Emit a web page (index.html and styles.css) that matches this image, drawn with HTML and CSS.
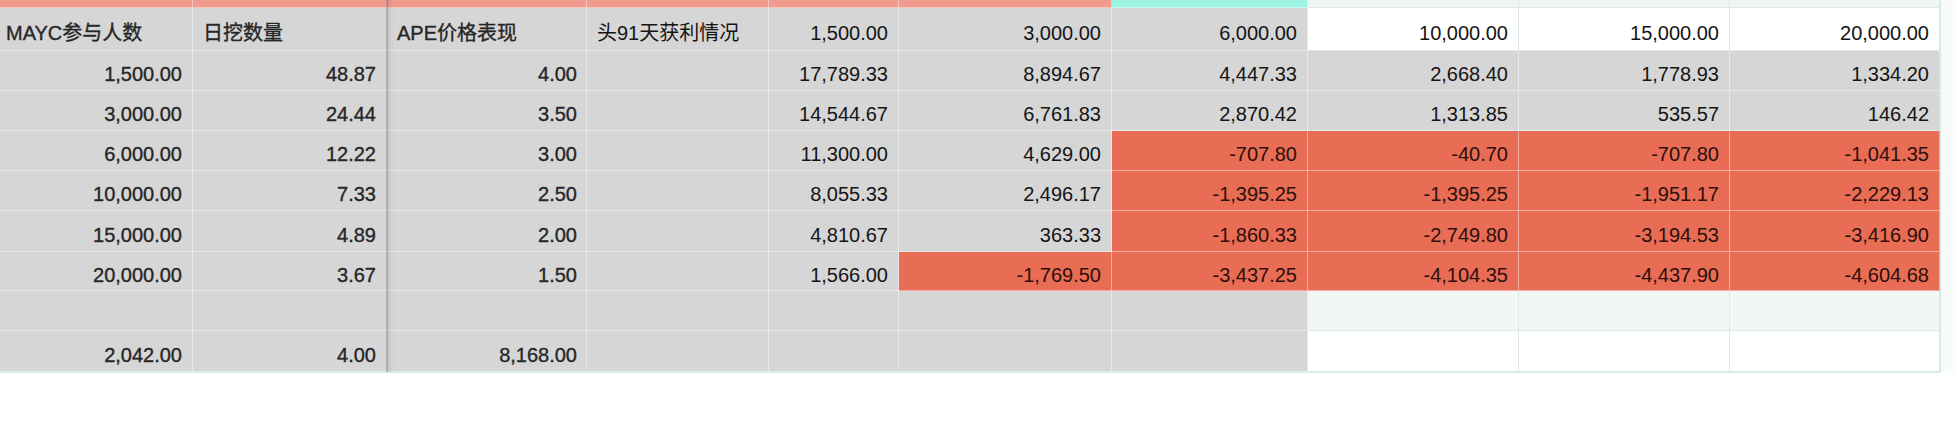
FILE: index.html
```html
<!DOCTYPE html>
<html lang="zh-CN">
<head>
<meta charset="utf-8">
<title>MAYC</title>
<link rel="stylesheet" href="styles.css">
</head>
<body>
<div class="page">
  <div class="sheet">
    <div class="c p"></div><div class="c p"></div><div class="c p"></div><div class="c p"></div><div class="c p"></div><div class="c p"></div><div class="c t"></div><div class="c b"></div><div class="c b"></div><div class="c b"></div>

    <div class="c g fz first txt">MAYC参与人数</div><div class="c g fz txt">日挖数量</div><div class="c g fz txt shade">APE价格表现</div><div class="c g txt">头91天获利情况</div><div class="c g">1,500.00</div><div class="c g">3,000.00</div><div class="c g">6,000.00</div><div class="c w">10,000.00</div><div class="c w">15,000.00</div><div class="c w">20,000.00</div>

    <div class="c g fz first">1,500.00</div><div class="c g fz">48.87</div><div class="c g fz shade">4.00</div><div class="c g"></div><div class="c g">17,789.33</div><div class="c g">8,894.67</div><div class="c g">4,447.33</div><div class="c g">2,668.40</div><div class="c g">1,778.93</div><div class="c g">1,334.20</div>

    <div class="c g fz first">3,000.00</div><div class="c g fz">24.44</div><div class="c g fz shade">3.50</div><div class="c g"></div><div class="c g">14,544.67</div><div class="c g">6,761.83</div><div class="c g">2,870.42</div><div class="c g">1,313.85</div><div class="c g">535.57</div><div class="c g">146.42</div>

    <div class="c g fz first">6,000.00</div><div class="c g fz">12.22</div><div class="c g fz shade">3.00</div><div class="c g"></div><div class="c g">11,300.00</div><div class="c g">4,629.00</div><div class="c r">-707.80</div><div class="c r">-40.70</div><div class="c r">-707.80</div><div class="c r">-1,041.35</div>

    <div class="c g fz first">10,000.00</div><div class="c g fz">7.33</div><div class="c g fz shade">2.50</div><div class="c g"></div><div class="c g">8,055.33</div><div class="c g">2,496.17</div><div class="c r">-1,395.25</div><div class="c r">-1,395.25</div><div class="c r">-1,951.17</div><div class="c r">-2,229.13</div>

    <div class="c g fz first">15,000.00</div><div class="c g fz">4.89</div><div class="c g fz shade">2.00</div><div class="c g"></div><div class="c g">4,810.67</div><div class="c g">363.33</div><div class="c r">-1,860.33</div><div class="c r">-2,749.80</div><div class="c r">-3,194.53</div><div class="c r">-3,416.90</div>

    <div class="c g fz first">20,000.00</div><div class="c g fz">3.67</div><div class="c g fz shade">1.50</div><div class="c g"></div><div class="c g">1,566.00</div><div class="c r">-1,769.50</div><div class="c r">-3,437.25</div><div class="c r">-4,104.35</div><div class="c r">-4,437.90</div><div class="c r">-4,604.68</div>

    <div class="c g fz first"></div><div class="c g fz"></div><div class="c g fz shade"></div><div class="c g"></div><div class="c g"></div><div class="c g"></div><div class="c g"></div><div class="c l"></div><div class="c l"></div><div class="c l"></div>

    <div class="c g fz first">2,042.00</div><div class="c g fz">4.00</div><div class="c g fz shade">8,168.00</div><div class="c g"></div><div class="c g"></div><div class="c g"></div><div class="c g"></div><div class="c w"></div><div class="c w"></div><div class="c w"></div>
  </div>
  <div class="edge"></div>
</div>
</body>
</html>
```

FILE: styles.css
```css
* { box-sizing: border-box; }

html, body {
  margin: 0;
  padding: 0;
  background: #ffffff;
}

body {
  width: 1956px;
  height: 440px;
  overflow: hidden;
  font-family: "Liberation Sans", Arial, "Noto Sans CJK SC", sans-serif;
  font-size: 20px;
  color: #141414;
}

.page {
  display: flex;
  align-items: flex-start;
}

.sheet {
  position: relative;
  display: grid;
  grid-template-columns: 193px 194px 200px 182px 130px 213px 196px 211px 211px 210px;
  grid-template-rows: 8px 43px 40px 40px 40px 40px 41px 39px 40px 41px;
  width: 1940px;
  border-bottom: 1px solid #d4ecea;
}

.sheet::after {
  content: "";
  position: absolute;
  left: 386px;
  top: 0;
  width: 8px;
  height: 100%;
  background: linear-gradient(to right, rgba(0,0,0,0.22) 0, rgba(0,0,0,0.22) 1.5px, rgba(0,0,0,0.07) 2px, rgba(0,0,0,0) 8px);
  pointer-events: none;
}

.edge {
  width: 16px;
  height: 372px;
  border-left: 1px solid #d3e9e7;
  background: linear-gradient(to right, #f7f9f9, #fbfcfc);
}

.c {
  display: flex;
  align-items: center;
  justify-content: flex-end;
  padding: 8px 10px 0 10px;
  border-right: 1px solid rgba(255, 255, 255, 0.45);
  border-bottom: 1px solid rgba(255, 255, 255, 0.45);
  white-space: nowrap;
  line-height: 23px;
}

.txt { justify-content: flex-start; }
.first { padding-left: 6px; }

.fz {
  color: #262626;
  -webkit-text-stroke: 0.35px #262626;
}

.shade { padding-right: 9px; }

.g { background: #d6d6d6; }
.r { background: #e96c55; color: #2b100b; }
.w { background: #ffffff; border-color: #dbe9e7; }
.l { background: #f2f7f6; border-color: #dbe9e7; }
.p { background: #f09a8d; padding: 0; }
.t { background: #9df5e4; padding: 0; }
.b { background: #f1f6f5; border-color: #dbe9e7; padding: 0; }
```
